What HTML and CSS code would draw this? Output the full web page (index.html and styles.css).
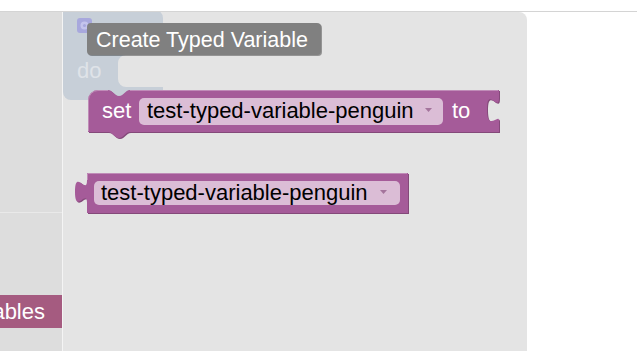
FILE: index.html
```html
<!DOCTYPE html>
<html lang="en">
<head>
    <meta charset="UTF-8">
    <title>Typed Variables</title>
    <link rel="stylesheet" href="styles.css">
</head>
<body>
    <div class="topbar"></div>
    <div class="main">
        <div class="toolbox">
            <div class="toolbox-upper"></div>
            <div class="category"><span>Variables</span></div>
        </div>
        <div class="flyout">
            <svg class="flyout-canvas" width="464" height="339" viewBox="0 0 464 339">
                <!-- faded procedure block behind the button -->
                <path class="faded" d="M 0 -2 H 92 A 8 8 0 0 1 100 6 V 43 H 63 A 8 8 0 0 0 55 51 V 67 A 8 8 0 0 0 63 75 H 100 V 88 H 8 A 8 8 0 0 1 0 80 Z"/>
                <rect class="gear-box" x="14" y="6" width="15" height="15" rx="3"/>
                <circle class="gear" cx="21.5" cy="13.5" r="4"/>
                <circle class="gear-hole" cx="21.5" cy="13.5" r="1.6"/>
                <text class="faded-text" x="14" y="66">do</text>

                <!-- flyout button -->
                <rect class="btn-shadow" x="25" y="12" width="234" height="32" rx="4"/>
                <rect class="btn" x="24" y="11" width="234" height="32" rx="4"/>
                <text class="btn-text" x="33" y="35">Create Typed Variable</text>

                <!-- set block -->
                <g class="block">
                    <path class="block-dark" transform="translate(1,1)" d="M 25 88 A 10 10 0 0 1 35 78 H 45 C 50 78 51 84 56 84 C 61 84 62 78 67 78 H 436 V 86 c 0 15 -12 -12 -12 11.25 s 12 3.75 12 11.25 V 120 H 67 C 62 120 61 126 56 126 C 51 126 50 120 45 120 H 25 Z"/>
                    <path class="block-main" d="M 25 88 A 10 10 0 0 1 35 78 H 45 C 50 78 51 84 56 84 C 61 84 62 78 67 78 H 436 V 86 c 0 15 -12 -12 -12 11.25 s 12 3.75 12 11.25 V 120 H 67 C 62 120 61 126 56 126 C 51 126 50 120 45 120 H 25 Z"/>
                    <path class="block-light" d="M 25.5 119 V 88 A 9.5 9.5 0 0 1 35 78.5 H 45 M 67 78.5 H 435"/>
                    <text class="label" x="39" y="106">set</text>
                    <rect class="field" x="76" y="86" width="304" height="27" rx="5"/>
                    <text class="field-text" x="84" y="106">test-typed-variable-penguin</text>
                    <polygon class="arrow" points="362,96 369,96 365.5,100"/>
                    <text class="label" x="389" y="106">to</text>
                </g>

                <!-- variable getter block -->
                <g class="block">
                    <path class="block-dark" transform="translate(1,1)" d="M 24 161 H 345 V 201 H 24 V 191 c 0 -15 -12 12 -12 -11.25 s 12 3.75 12 -11.25 Z"/>
                    <path class="block-main" d="M 24 161 H 345 V 201 H 24 V 191 c 0 -15 -12 12 -12 -11.25 s 12 3.75 12 -11.25 Z"/>
                    <path class="block-light" d="M 24.5 168 V 161.5 H 344"/>
                    <rect class="field" x="31" y="169" width="306" height="24" rx="5"/>
                    <text class="field-text" x="38" y="188">test-typed-variable-penguin</text>
                    <polygon class="arrow" points="317,178 324,178 320.5,182"/>
                </g>
            </svg>
        </div>
        <div class="workspace"></div>
    </div>
</body>
</html>
```

FILE: styles.css
```css
* {
    margin: 0;
    padding: 0;
    box-sizing: border-box;
}
body {
    width: 637px;
    height: 351px;
    overflow: hidden;
    background-color: #fff;
    font-family: "Liberation Sans", Arial, sans-serif;
}
.topbar {
    height: 12px;
    border-bottom: 1px solid #d4d4d4;
}
.main {
    display: flex;
    height: 339px;
}
.toolbox {
    width: 63px;
    background-color: #ddd;
    border-right: 1px solid #f4f4f4;
    display: flex;
    flex-direction: column;
}
.toolbox-upper {
    height: 201px;
    border-bottom: 1px solid #e9e9e9;
}
.category {
    margin-top: 82px;
    height: 33px;
    background-color: #a55b80;
    color: #fff;
    font-size: 22px;
    display: flex;
    align-items: center;
    justify-content: flex-end;
    overflow: hidden;
    white-space: nowrap;
    padding-right: 17px;
}
.flyout {
    width: 464px;
    background-color: #e4e4e4;
    border-top-right-radius: 8px;
    overflow: hidden;
}
.flyout-canvas {
    display: block;
}
.workspace {
    flex: 1;
}
.faded {
    fill: #c7cfd8;
}
.gear-box {
    fill: #a8a8dd;
}
.gear {
    fill: #c4c4ec;
}
.gear-hole {
    fill: #a8a8dd;
}
.faded-text {
    fill: #dfe3e8;
    font-size: 22px;
}
.btn-shadow {
    fill: rgba(0, 0, 0, 0.35);
}
.btn {
    fill: #808080;
}
.btn-text {
    fill: #fff;
    font-size: 21.5px;
}
.block-dark {
    fill: #84497a;
}
.block-main {
    fill: #a55b99;
}
.block-light {
    fill: none;
    stroke: #c08cb8;
    stroke-width: 1;
}
.label {
    fill: #fff;
    font-size: 22px;
}
.field {
    fill: #dbbdd6;
}
.field-text {
    fill: #000;
    font-size: 22px;
}
.arrow {
    fill: #a4749c;
}
```
